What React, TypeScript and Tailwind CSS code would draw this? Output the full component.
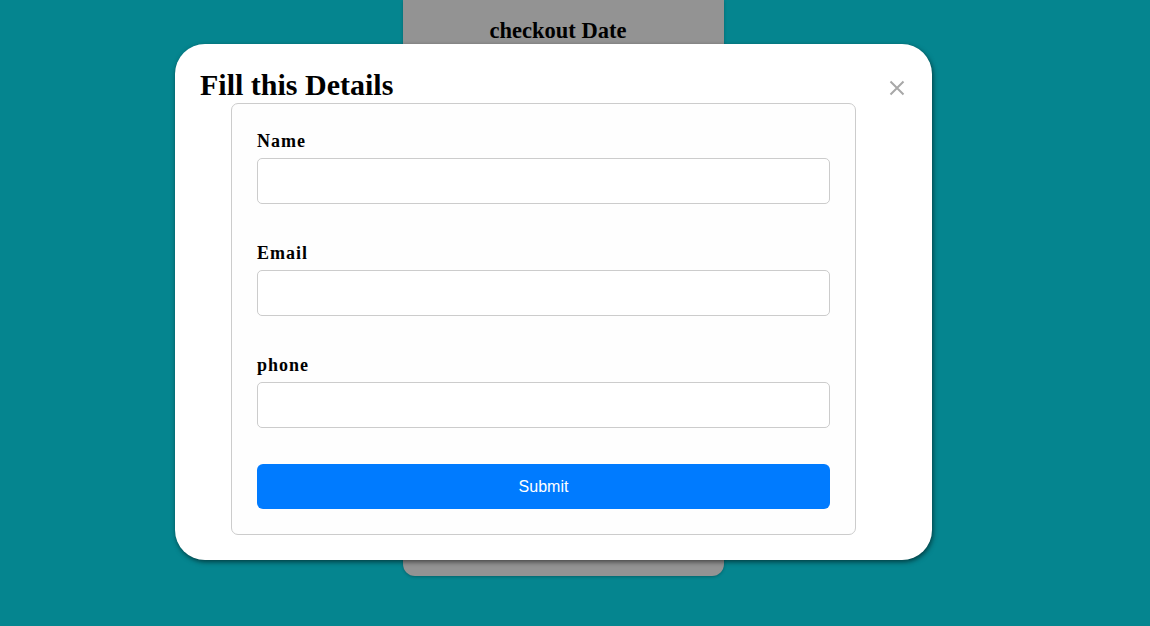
import * as React from "react";

const fields = [
  { id: "name", label: "Name", type: "text" },
  { id: "email", label: "Email", type: "email" },
  { id: "phone", label: "phone", type: "tel" },
];

function CloseIcon() {
  return (
    <svg viewBox="0 0 16 16" className="size-[16px]" fill="none">
      <path d="M1.5 1.5l13 13M14.5 1.5l-13 13" stroke="#a8a8a8" strokeWidth="2" />
    </svg>
  );
}

export default function App() {
  return (
    <div className="relative h-[626px] w-full overflow-hidden bg-[#05858f] font-['Liberation_Serif',serif] text-black">
      {/* page card behind the overlay */}
      <div className="ml-[403px] h-[576px] w-[321px] rounded-b-[12px] bg-[#939393] pr-[11px] pt-[18px] text-center shadow-[0_1px_3px_rgba(0,0,0,0.25)]">
        <h3 className="text-[22.5px] font-bold leading-[25px]">checkout Date</h3>
      </div>

      {/* modal */}
      <div className="absolute left-[175px] top-[44px] h-[516px] w-[757px] rounded-[30px] bg-white px-[25px] pt-[24px] shadow-[1px_2px_5px_rgba(0,0,0,0.55)]">
        <button
          type="button"
          className="absolute right-[27px] top-[36px] flex size-[16px] items-center justify-center"
        >
          <CloseIcon />
        </button>
        <h2 className="text-[30px] font-bold leading-[33px]">Fill this Details</h2>

        <form className="ml-[31px] mt-[2px] w-[625px] rounded-[7px] border border-[#cccccc] bg-[#fefefe] p-[25px]">
          {fields.map((f, i) => (
            <div key={f.id} className={i > 0 ? "mt-[37px]" : ""}>
              <label
                htmlFor={f.id}
                className="mb-[4px] block text-[18px] font-bold leading-[25px] tracking-[1px]"
              >
                {f.label}
              </label>
              <input
                id={f.id}
                type={f.type}
                className="block h-[46px] w-full rounded-[5px] border border-[#cccccc] bg-white px-3"
              />
            </div>
          ))}
          <button
            type="button"
            className="mt-[36px] block h-[45px] w-full rounded-[6px] bg-[#007bff] font-['Liberation_Sans',Arial,sans-serif] text-[16px] text-white"
          >
            Submit
          </button>
        </form>
      </div>
    </div>
  );
}
